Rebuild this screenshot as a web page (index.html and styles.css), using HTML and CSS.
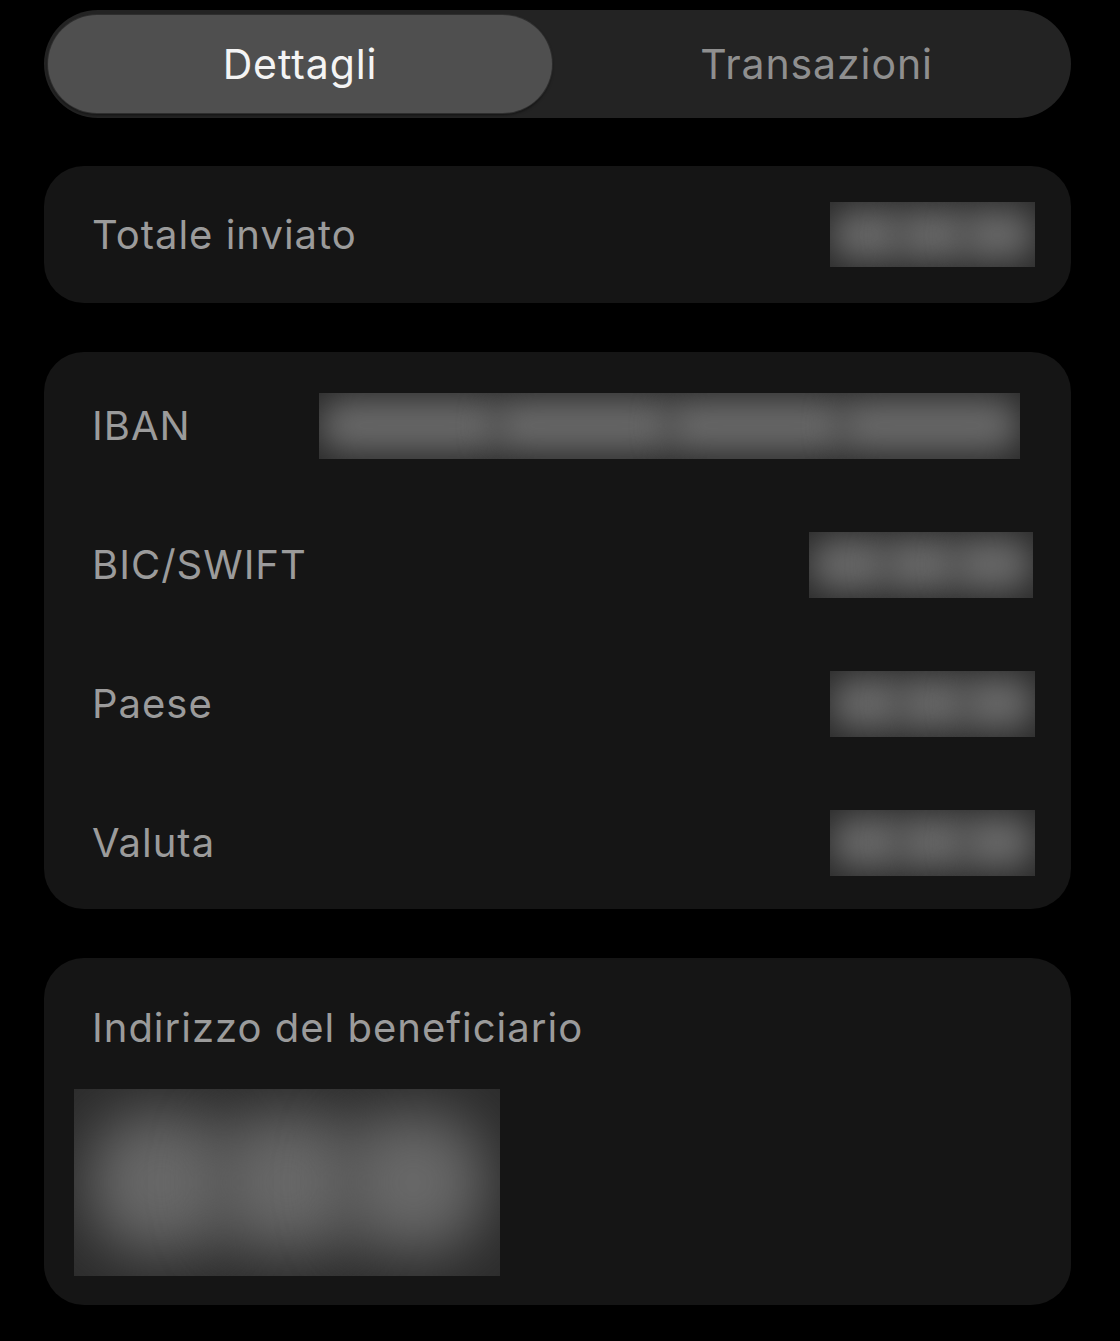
FILE: index.html
```html
<!DOCTYPE html>
<html lang="it">
<head>
<meta charset="utf-8">
<title>Dettagli</title>
<link rel="stylesheet" href="styles.css">
</head>
<body>
<div class="page">
  <div class="segmented">
    <div class="seg seg-active">Dettagli</div>
    <div class="seg">Transazioni</div>
  </div>

  <div class="card card-total">
    <div class="label">Totale inviato</div>
    <div class="redact r-total"><span></span><span></span><span></span></div>
  </div>

  <div class="card card-details">
    <div class="row">
      <div class="label">IBAN</div>
      <div class="redact r-iban"><span></span><span></span><span></span><span></span></div>
    </div>
    <div class="row">
      <div class="label">BIC/SWIFT</div>
      <div class="redact r-bic"><span></span><span></span><span></span></div>
    </div>
    <div class="row">
      <div class="label">Paese</div>
      <div class="redact r-short"><span></span><span></span><span></span></div>
    </div>
    <div class="row">
      <div class="label">Valuta</div>
      <div class="redact r-short"><span></span><span></span><span></span></div>
    </div>
  </div>

  <div class="card card-address">
    <div class="label">Indirizzo del beneficiario</div>
    <div class="redact r-address"><span></span><span></span><span></span></div>
  </div>
</div>
</body>
</html>
```

FILE: styles.css
```css
* { box-sizing: border-box; }
html, body {
  margin: 0;
  padding: 0;
  background: #000;
}
body {
  font-family: Inter, "Noto Sans", Roboto, sans-serif;
  -webkit-font-smoothing: antialiased;
}
.page {
  padding: 10px 49px 0 44px;
  width: 1120px;
}
.segmented {
  height: 108px;
  border-radius: 54px;
  background: #232323;
  padding: 5px 4px;
  display: flex;
}
.seg {
  width: 504px;
  height: 98px;
  border-radius: 49px;
  display: flex;
  align-items: center;
  justify-content: center;
  font-size: 41px;
  color: #8f8f8f;
  letter-spacing: 0.9px;
}
.seg + .seg {
  flex: 1;
  padding-left: 14px;
}
.seg-active {
  background: #4f4f4f;
  color: #f4f4f4;
  box-shadow: 0 0 0 1px #2e2e2e, 0 2px 3px rgba(0,0,0,0.5);
}
.card {
  background: #151515;
  border-radius: 40px;
  margin-top: 48px;
}
.label {
  font-size: 40px;
  color: #9b9b9b;
  letter-spacing: 1px;
  white-space: nowrap;
}
.card-total {
  height: 137px;
  display: flex;
  align-items: center;
  justify-content: space-between;
  padding: 0 36px 0 48px;
}
.card-details {
  margin-top: 49px;
  height: 557px;
  padding: 4px 36px 0 48px;
}
.row {
  height: 139px;
  display: flex;
  align-items: center;
  justify-content: space-between;
}
.card-address {
  margin-top: 49px;
  height: 347px;
  padding: 48px 0 0 30px;
}
.card-address .label {
  padding-left: 18px;
  line-height: 44px;
}
.redact {
  background: #2c2c2c;
  overflow: hidden;
  display: flex;
  align-items: center;
  gap: 0;
  padding: 0 6px;
}
.redact span {
  flex: 1;
  height: 80%;
  background: #686868;
  border-radius: 30px;
  filter: blur(16px);
  margin: 0 -6px;
}
.r-total { width: 205px; height: 65px; }
.r-iban { width: 701px; height: 66px; margin-right: 15px; }
.r-bic { width: 224px; height: 66px; margin-right: 2px; }
.r-short { width: 205px; height: 66px; }
.r-address {
  width: 426px;
  height: 187px;
  margin-top: 39px;
  padding: 0 24px;
}
.r-address span {
  height: 75%;
  border-radius: 60px;
  filter: blur(30px);
  margin: 0 -10px;
}
```
